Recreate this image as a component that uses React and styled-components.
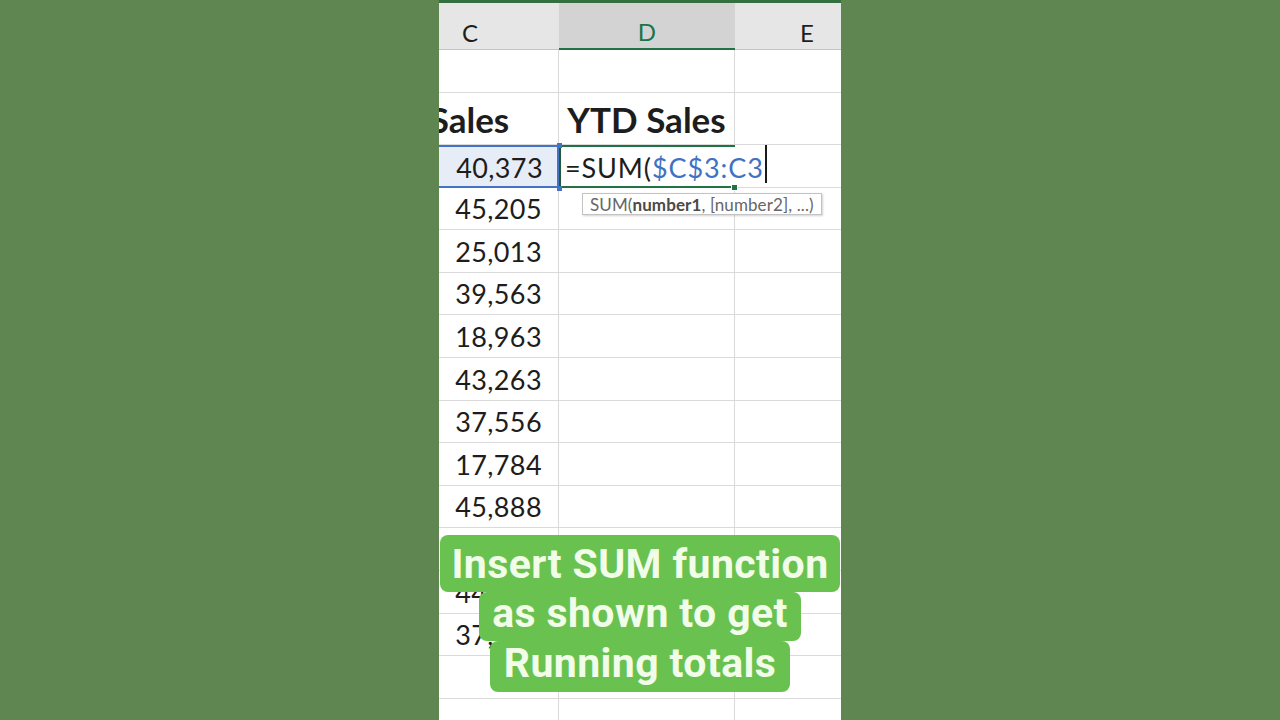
import React from "react";
import styled, { createGlobalStyle } from "styled-components";

const Global = createGlobalStyle`
  html, body { margin: 0; padding: 0; }
  body { background: #5f8551; width: 1280px; height: 720px; overflow: hidden; }
`;

const Page = styled.div`
  width: 1280px;
  height: 720px;
  display: flex;
  justify-content: center;
  background: #5f8551;
`;

const Sheet = styled.div`
  position: relative;
  width: 402px;
  height: 720px;
  background: #ffffff;
  overflow: hidden;
  display: flex;
  flex-direction: column;
  font-family: "Lato", "Open Sans", sans-serif;
  color: #1d1d1d;
`;

const TopStrip = styled.div`
  height: 3px;
  flex: none;
  background: #34703f;
`;

const Grid = styled.div`
  display: grid;
  grid-template-columns: 178px 176px 144px;
  grid-template-rows: 47px 43px 52px repeat(14, 42.6px);
  margin-left: -58px;
  width: 498px;
`;

const HeaderCell = styled.div`
  display: flex;
  justify-content: center;
  align-items: flex-end;
  padding-bottom: 4px;
  box-sizing: border-box;
  font-size: 24px;
  line-height: 1;
  background: ${(p) => (p.$active ? "#d3d3d3" : "#e6e6e6")};
  color: ${(p) => (p.$active ? "#217346" : "#1e1e1e")};
  border-bottom: ${(p) => (p.$active ? "2px solid #217346" : "1px solid #c4c4c4")};
`;

const Cell = styled.div`
  position: relative;
  display: flex;
  align-items: flex-end;
  box-sizing: border-box;
  border-bottom: 1px solid #dadada;
  border-right: ${(p) => (p.$last ? "none" : "1px solid #dadada")};
  font-size: 27px;
  letter-spacing: 0.4px;
  line-height: 1;
  padding-bottom: 7px;
  white-space: nowrap;
  justify-content: ${(p) =>
    p.$align === "right" ? "flex-end" : p.$align === "center" ? "center" : "flex-start"};
  padding-right: ${(p) => (p.$align === "right" ? "16px" : "0")};
  padding-left: ${(p) => (p.$align === "left" ? "6px" : "0")};
`;

const TitleCell = styled(Cell)`
  font-size: 35px;
  font-weight: 700;
  letter-spacing: 0;
  padding-bottom: 7px;
  overflow: hidden;
`;

const SelectedCell = styled(Cell)`
  background: #e7edf6;
  border-right: none;
  border-bottom: none;
  box-shadow: inset 0 2px 0 #4472c4, inset 0 -2px 0 #4472c4, inset -2px 0 0 #4472c4;
  &::before,
  &::after {
    content: "";
    position: absolute;
    right: -3px;
    width: 5px;
    height: 5px;
    background: #4472c4;
    z-index: 3;
  }
  &::before { top: -2px; }
  &::after { bottom: -3px; }
`;

const EditCell = styled(Cell)`
  z-index: 2;
  border-right: none;
  border-bottom: none;
  padding-left: 6px;
  letter-spacing: 0.9px;
  box-shadow: inset 0 2px 0 #217346, inset 0 -2px 0 #217346, inset 2px 0 0 #1f5a38;
  &::after {
    content: "";
    position: absolute;
    right: -3px;
    bottom: -3px;
    width: 5px;
    height: 5px;
    background: #217346;
    border: 1px solid #ffffff;
  }
`;

const Ref = styled.span`
  flex: none;
  color: #3f72c3;
`;

const Caret = styled.span`
  flex: none;
  align-self: center;
  display: block;
  width: 2px;
  height: 38px;
  margin-left: 1px;
  margin-top: 2px;
  background: #1a1a1a;
`;

const Tooltip = styled.div`
  position: absolute;
  left: 143px;
  top: 193px;
  height: 22px;
  box-sizing: border-box;
  padding: 0 7px;
  display: flex;
  align-items: center;
  background: #ffffff;
  border: 1px solid #c3c3c3;
  box-shadow: 1px 1px 2px rgba(0, 0, 0, 0.18);
  font-size: 17px;
  letter-spacing: 0.1px;
  color: #666666;
  white-space: nowrap;
  z-index: 4;
  b { color: #4a4a4a; font-weight: 700; }
`;

const Caption = styled.div`
  position: absolute;
  top: 535px;
  left: 0;
  right: 0;
  display: flex;
  flex-direction: column;
  align-items: center;
  z-index: 5;
  font-family: "Roboto", "Noto Sans", sans-serif;
  font-weight: 700;
  font-size: 41px;
  letter-spacing: 0.4px;
  color: #f1fce9;
`;

const CaptionLine = styled.div`
  background: #69c24f;
  border-radius: 8px;
  white-space: nowrap;
  line-height: ${(p) => p.$lh}px;
  padding: ${(p) => p.$pad};
`;

const values = [
  "40,373",
  "45,205",
  "25,013",
  "39,563",
  "18,963",
  "43,263",
  "37,556",
  "17,784",
  "45,888",
  "42,118",
  "44,610",
  "37,402",
  "",
  "",
];

export default function App() {
  return (
    <>
      <Global />
      <Page>
        <Sheet>
          <TopStrip />
          <Grid>
            <HeaderCell>C</HeaderCell>
            <HeaderCell $active>D</HeaderCell>
            <HeaderCell>E</HeaderCell>

            <Cell />
            <Cell />
            <Cell $last />

            <TitleCell $align="center">Sales</TitleCell>
            <TitleCell $align="center">YTD Sales</TitleCell>
            <Cell $last />

            {values.map((v, i) =>
              i === 0 ? (
                <React.Fragment key={i}>
                  <SelectedCell $align="right">{v}</SelectedCell>
                  <EditCell $align="left">
                    =SUM(<Ref>$C$3:C3</Ref>
                    <Caret />
                  </EditCell>
                  <Cell $last />
                </React.Fragment>
              ) : (
                <React.Fragment key={i}>
                  <Cell $align="right">{v}</Cell>
                  <Cell />
                  <Cell $last />
                </React.Fragment>
              )
            )}
          </Grid>
          <Tooltip>
            SUM(<b>number1</b>, [number2], ...)
          </Tooltip>
          <Caption>
            <CaptionLine $lh={50} $pad="4px 11px 3px">Insert SUM function</CaptionLine>
            <CaptionLine $lh={42} $pad="0 13px 7px">as shown to get</CaptionLine>
            <CaptionLine $lh={42} $pad="1px 14px 8px">Running totals</CaptionLine>
          </Caption>
        </Sheet>
      </Page>
    </>
  );
}
